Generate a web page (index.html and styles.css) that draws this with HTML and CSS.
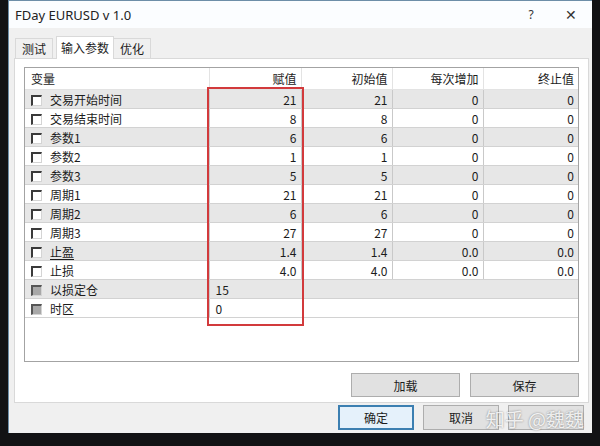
FILE: index.html
```html
<!DOCTYPE html>
<html lang="zh">
<head>
    <meta charset="UTF-8">
    <title>FDay EURUSD v 1.0</title>
    <link rel="stylesheet" href="styles.css">
</head>
<body>
    <div class="dialog">
        <!-- Title bar -->
        <div class="titlebar">
            <span class="title">FDay EURUSD v 1.0</span>
            <span class="tb-btn help">?</span>
            <span class="tb-btn close">✕</span>
        </div>

        <!-- Tabs -->
        <div class="tabs">
            <div class="tab">测试</div>
            <div class="tab active">输入参数</div>
            <div class="tab">优化</div>
        </div>

        <div class="panel">
            <div class="listview">
                <table class="params">
                    <colgroup>
                        <col style="width: 184px">
                        <col style="width: 92px">
                        <col style="width: 91px">
                        <col style="width: 91px">
                        <col>
                    </colgroup>
                    <thead>
                        <tr>
                            <th class="name">变量</th>
                            <th>赋值</th>
                            <th>初始值</th>
                            <th>每次增加</th>
                            <th>终止值</th>
                        </tr>
                    </thead>
                    <tbody>
                        <tr><td class="name"><span class="chk"></span>交易开始时间</td><td>21</td><td>21</td><td>0</td><td>0</td></tr>
                        <tr><td class="name"><span class="chk"></span>交易结束时间</td><td>8</td><td>8</td><td>0</td><td>0</td></tr>
                        <tr><td class="name"><span class="chk"></span>参数1</td><td>6</td><td>6</td><td>0</td><td>0</td></tr>
                        <tr><td class="name"><span class="chk"></span>参数2</td><td>1</td><td>1</td><td>0</td><td>0</td></tr>
                        <tr><td class="name"><span class="chk"></span>参数3</td><td>5</td><td>5</td><td>0</td><td>0</td></tr>
                        <tr><td class="name"><span class="chk"></span>周期1</td><td>21</td><td>21</td><td>0</td><td>0</td></tr>
                        <tr><td class="name"><span class="chk"></span>周期2</td><td>6</td><td>6</td><td>0</td><td>0</td></tr>
                        <tr><td class="name"><span class="chk"></span>周期3</td><td>27</td><td>27</td><td>0</td><td>0</td></tr>
                        <tr><td class="name"><span class="chk"></span><u>止盈</u></td><td>1.4</td><td>1.4</td><td>0.0</td><td>0.0</td></tr>
                        <tr><td class="name"><span class="chk"></span>止损</td><td>4.0</td><td>4.0</td><td>0.0</td><td>0.0</td></tr>
                        <tr><td class="name"><span class="chk disabled"></span>以损定仓</td><td class="str">15</td><td colspan="3"></td></tr>
                        <tr><td class="name"><span class="chk disabled"></span>时区</td><td class="str">0</td><td colspan="3"></td></tr>
                    </tbody>
                </table>
                <!-- red marker drawn over the 赋值 column -->
                <div class="highlight"></div>
            </div>

            <div class="panel-buttons">
                <button class="btn wide">加载</button>
                <button class="btn wide">保存</button>
            </div>
        </div>

        <div class="footer">
            <button class="btn default">确定</button>
            <button class="btn">取消</button>
            <button class="btn"></button>
            <span class="watermark">知乎 @魏魏</span>
        </div>
    </div>
</body>
</html>
```

FILE: styles.css
```css
body {
    margin: 0;
    background-color: #121214;
    font-family: "Noto Sans CJK SC", "Noto Sans", sans-serif;
    font-size: 12px;
    color: #1c1c1c;
}

/* Dialog window */
.dialog {
    position: relative;
    width: 584px;
    height: 433px;
    margin-left: 8px;
    background-color: #f0f0f0;
    box-sizing: border-box;
    border-left: 1px solid #6d8ea8;
    border-top: 1px solid #6d8ea8;
}

.titlebar {
    height: 27px;
    background-color: #fbfdff;
    display: flex;
    align-items: center;
    padding-left: 6px;
}

.title {
    flex: 1;
    font-family: "Noto Sans", sans-serif;
    font-size: 13px;
    color: #222;
}

.tb-btn {
    width: 40px;
    text-align: center;
    font-family: "Noto Sans", sans-serif;
    font-size: 13px;
    color: #333;
}

.help {
    font-size: 12px;
}

.close {
    margin-right: 1px;
    font-size: 14px;
}

/* Tabs */
.tabs {
    display: flex;
    align-items: flex-end;
    height: 22px;
    margin-top: 8px;
    padding-left: 6px;
}

.tab {
    height: 20px;
    line-height: 20px;
    padding: 0 6px;
    border: 1px solid #d9d9d9;
    border-bottom: none;
    box-sizing: border-box;
    background-color: #f0f0f0;
    margin-right: -1px;
}

.tab.active {
    height: 23px;
    line-height: 22px;
    padding: 0 4px;
    background-color: #fff;
    margin-bottom: -1px;
    margin-left: 4px;
    position: relative;
    z-index: 1;
}

/* Tab page */
.panel {
    margin: 0 3px 0 5px;
    height: 345px;
    box-sizing: border-box;
    background-color: #fff;
    border: 1px solid #d9d9d9;
    padding: 8px 9px 0 9px;
}

.listview {
    position: relative;
    height: 295px;
    box-sizing: border-box;
    border: 1px solid #a3a3a3;
    overflow: hidden;
}

.params {
    width: 100%;
    border-collapse: collapse;
    table-layout: fixed;
}

.params th {
    height: 21px;
    font-weight: normal;
    text-align: right;
    padding: 0 4px 0 0;
    border-left: 1px solid #e3e3e3;
    border-bottom: 1px solid #e3e3e3;
    background-color: #fff;
}

.params th.name {
    text-align: left;
    padding-left: 6px;
    border-left: none;
}

.params td {
    height: 18px;
    padding: 0 4px 0 0;
    text-align: right;
    border-left: 1px solid #c9c9c9;
    border-bottom: 1px solid #d2d2d2;
    white-space: nowrap;
}

.params td.name {
    text-align: left;
    padding-left: 6px;
    border-left: none;
}

.params td.str {
    text-align: left;
    padding-left: 6px;
}

.params td[colspan] {
    border-left: none;
}

.params tbody tr:nth-child(odd) {
    background-color: #e7e7e7;
}

.params u {
    text-decoration-thickness: 1px;
    text-underline-offset: 2px;
}

/* Old style flat checkbox */
.chk {
    display: inline-block;
    width: 8px;
    height: 8px;
    margin-right: 8px;
    vertical-align: -1px;
    border-top: 2px solid #3a3a3a;
    border-left: 2px solid #3a3a3a;
    border-right: 1px solid #d4d4d4;
    border-bottom: 1px solid #d4d4d4;
    background-color: #fff;
}

.chk.disabled {
    background-color: #a8a8a8;
    border-top-color: #555;
    border-left-color: #555;
}

.highlight {
    position: absolute;
    left: 182px;
    top: 19px;
    width: 93px;
    height: 235px;
    border: 2px solid #d23a3c;
}

/* Buttons */
.panel-buttons {
    display: flex;
    justify-content: flex-end;
    gap: 10px;
    margin-top: 11px;
}

.btn {
    width: 76px;
    height: 25px;
    font-family: "Noto Sans CJK SC", sans-serif;
    font-size: 12px;
    color: #1c1c1c;
    background-color: #e1e1e1;
    border: 1px solid #adadad;
    padding: 0;
}

.btn.wide {
    width: 109px;
    height: 24px;
}

.btn.default {
    border: 2px solid #3c7fb1;
    background-color: #e5f1fb;
}

.footer {
    position: relative;
    display: flex;
    justify-content: flex-end;
    gap: 9px;
    padding: 2px 8px 0 0;
}

.watermark {
    position: absolute;
    right: 8px;
    top: 2px;
    font-size: 19px;
    color: rgba(255, 255, 255, 0.85);
    text-shadow: 0 0 2px rgba(0, 0, 0, 0.45);
}
```
